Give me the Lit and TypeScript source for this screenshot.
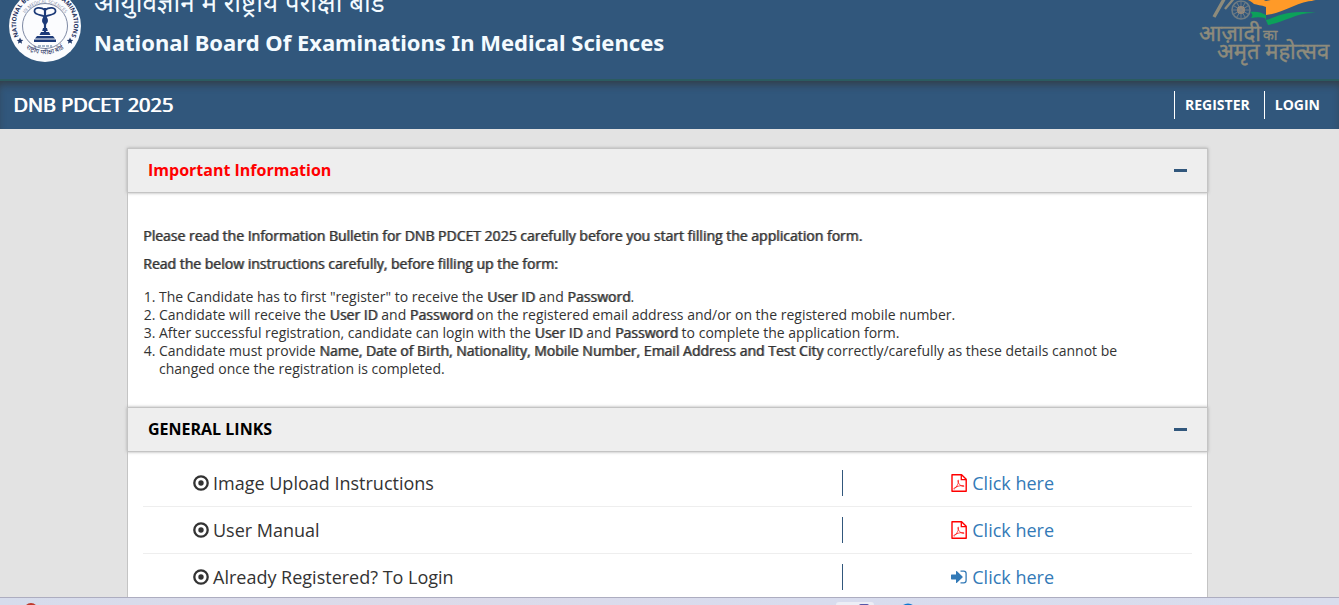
import { LitElement, html, css, svg, nothing } from "lit";
import { customElement, property } from "lit/decorators.js";

type LinkRow = { label: string; kind: "pdf" | "login"; href: string };

const LINKS: LinkRow[] = [
  { label: "Image Upload Instructions", kind: "pdf", href: "#image-upload" },
  { label: "User Manual", kind: "pdf", href: "#user-manual" },
  { label: "Already Registered? To Login", kind: "login", href: "#login" },
];

const pdfIcon = html`<svg class="icon pdf" viewBox="0 0 16 18" width="16" height="18" aria-hidden="true">
  <path d="M1 .8h9.6L15.2 5.200V17.200H1z" fill="none" stroke="currentColor" stroke-width="1.4" stroke-linejoin="round" />
  <path d="M10.300 1v4.700H15" fill="none" stroke="currentColor" stroke-width="1.300" />
  <path d="M3 15.200c1.500-.6 4.500-5 4.600-8.300.1-1.200-1-1-.8.200.4 2.300 2.500 4.900 5.200 5.400 1.400.2 1.500-.9.100-1-2.400-.1-6.300.8-8.600 2.400-.9.700-1 1.200-.5 1.300z" fill="none" stroke="currentColor" stroke-width=".7" />
</svg>`;

const loginIcon = html`<svg class="icon" viewBox="0 0 16 18" width="16" height="18" aria-hidden="true">
  <path d="M0 7.200a.6.6 0 0 1 .6-.6H5V3.600c0-.6.6-.8 1-.4l5.500 5.300c.3.300.3.700 0 1L6 14.800c-.4.400-1 .2-1-.4v-3H.6a.6.6 0 0 1-.6-.6z" fill="currentColor" />
  <path d="M9.500 3.200h3.200c1.400 0 2.400 1 2.400 2.300v7c0 1.300-1 2.300-2.400 2.300H9.500" fill="none" stroke="currentColor" stroke-width="1.300" />
</svg>`;

const bulletIcon = html`<svg class="icon bullet" viewBox="0 0 16 16" width="16" height="16" aria-hidden="true">
  <circle cx="8" cy="8" r="6.700" fill="none" stroke="currentColor" stroke-width="2.300" />
  <circle cx="8" cy="8" r="2.700" fill="currentColor" />
</svg>`;

@customElement("board-seal")
class BoardSeal extends LitElement {
  static styles = css`
    :host { display: block; }
    svg { display: block; }
    text { font-family: "Open Sans", "Noto Sans", sans-serif; fill: #1c2f5c; }
  `;
  render() {
    return html`<svg width="72" height="72" viewBox="0 0 72 72" role="img" aria-label="National Board of Examinations seal">
      <defs>
        <path id="outer" d="M10 47A29 29 0 1 1 62 47" />
        <path id="inner" d="M13 46A24.500 24.500 0 1 1 59 46" />
        <path id="lower" d="M7 47A33 33 0 0 0 65 47" />
      </defs>
      <circle cx="36" cy="36" r="36" fill="#fbfcfe" />
      <circle cx="36" cy="36" r="22.500" fill="none" stroke="#5d6b8c" stroke-width=".8" />
      <text font-size="6.200" font-weight="700"><textPath href="#outer" startOffset="50%" text-anchor="middle">NATIONAL BOARD OF EXAMINATIONS</textPath></text>
      <text font-size="4.500" opacity=".6"><textPath href="#inner" startOffset="50%" text-anchor="middle">IN MEDICAL SCIENCES</textPath></text>
      <text font-size="6.500"><textPath href="#lower" startOffset="50%" text-anchor="middle">राष्ट्रीय परीक्षा बोर्ड</textPath></text>
      <path d="M11 47.500l1 2.200 2.300.2-1.800 1.600.6 2.300-2.100-1.200-2.100 1.200.6-2.300-1.800-1.600 2.300-.2zM61 47.500l1 2.200 2.300.2-1.800 1.600.6 2.300-2.100-1.200-2.100 1.200.6-2.300-1.800-1.600 2.300-.2z" fill="#1d3568" />
      <g fill="none" stroke="#1c3a78" stroke-width="1.800">
        <path d="M36 20c-4-3-11-3-10.500 1.500s9 2.500 11.500 6-1 5-1 8" />
        <path d="M36 20c4-3 11-3 10.500 1.500s-9 2.500-11.500 6 1 5 1 8" />
        <path d="M36 18v24" stroke-width="2.200" />
      </g>
      <circle cx="36" cy="31" r="2.800" fill="#1c3a78" />
      <path d="M34 38h4l.8 3h-5.600zM32 42h8l1.500 3h-11zM28 46h16l2 2.500H26zM25 49.500h22v2.500H25z" fill="#1c3a78" />
      <path d="M29 56h14" stroke="#a3b6ca" stroke-width="2" stroke-dasharray="3 1" />
    </svg>`;
  }
}

@customElement("amrit-mark")
class AmritMark extends LitElement {
  static styles = css`
    :host { display: block; }
    svg { display: block; overflow: visible; }
    text { font-family: "Noto Sans Devanagari", "Noto Sans", sans-serif; fill: #8e8b7b; stroke: #8e8b7b; stroke-width: .4; }
  `;
  render() {
    const spokes = Array.from({ length: 12 }, (_, i) => i * 30);
    return html`<svg width="134" height="84" viewBox="0 0 134 84" role="img" aria-label="Azadi Ka Amrit Mahotsav">
      <path d="M12 16h18L17 39" fill="none" stroke="#8e8b7b" stroke-width="3.400" />
      <path d="M39 18L28 31" fill="none" stroke="#8e8b7b" stroke-width="2.400" />
      <circle cx="44" cy="32" r="9" fill="none" stroke="#6f7c83" stroke-width="1.600" />
      <circle cx="44" cy="32" r="4" fill="#a58c70" />
      ${spokes.map((a) => svg`<path d="M44 32v-8.500" stroke="#7d8286" stroke-width=".8" transform="rotate(${a} 44 32)" />`)}
      <path d="M46 20C54 16 62 20 69 23C82 20 96 18 120 23C104 21 88 35 69 37V29C64 27 60 27 57 26C54 23 51 22 46 20z" fill="#ff9a28" />
      <path d="M53 34C59 33 64 34 69 37V42C78 40 88 31 119 35C100 34 88 44 71 47L68 40C64 39 59 39 54 40C56 38 56 36 53 34z" fill="#0ca15a" />
      <text x="2" y="63" font-size="22">आज़ादी</text>
      <text x="66" y="62" font-size="14">का</text>
      <text x="20" y="81" font-size="22">अमृत महोत्सव</text>
    </svg>`;
  }
}

@customElement("info-panel")
class InfoPanel extends LitElement {
  @property() heading = "";
  @property({ type: Boolean }) alert = false;
  @property({ type: Boolean }) open = true;

  static styles = css`
    :host { display: block; }
    .head {
      display: flex; align-items: center; justify-content: space-between;
      box-sizing: border-box; width: 100%; margin: 0; padding: 10px 20px 11px;
      border: 1px solid #c4c4c4; background: #eee; box-shadow: 0 0 3px #aaa;
      font: 700 16px/22px "Open Sans", sans-serif; color: #000; text-align: left;
      cursor: pointer;
    }
    .alert { color: #f00; }
    .minus { width: 13px; height: 3px; background: #31577c; }
    .body { border: solid #c4c4c4; border-width: 0 1px; padding: 0 15px; }
    h2 { margin: 0; font: inherit; }
  `;
  render() {
    return html`<h2>
        <button class="head ${this.alert ? "alert" : ""}" aria-expanded=${this.open} @click=${() => (this.open = !this.open)}>
          <span>${this.heading}</span><span class="minus"></span>
        </button>
      </h2>
      ${this.open ? html`<div class="body"><slot></slot></div>` : nothing}`;
  }
}

@customElement("app-root")
class AppRoot extends LitElement {
  static styles = css`
    :host {
      display: flex; flex-direction: column; height: 100vh; overflow: hidden;
      background: #e3e3e3; color: #333;
      font: 14px/18px "Open Sans", "Noto Sans", sans-serif;
    }
    .view { flex: 1; min-height: 0; overflow: hidden; }
    .banner {
      display: flex; justify-content: space-between; align-items: flex-end;
      margin-top: -22px; padding: 0 8px 17px 9px;
      background: #31577c; border-bottom: 2px solid #2b5b60; color: #f4fbff;
    }
    .brand { display: flex; align-items: flex-end; gap: 13px; }
    .names { display: flex; flex-direction: column; }
    .hindi { font: 400 26px/32px "Noto Sans Devanagari", "Noto Sans", sans-serif; }
    .english { font: 700 22px/40px "Noto Sans", "Open Sans", sans-serif; }
    .nav {
      display: flex; align-items: center; justify-content: space-between;
      padding: 0 9px 0 13px; min-height: 48px; background: #31577c; color: #fff;
      box-shadow: inset 0 6px 8px -3px #333d44;
    }
    .nav h1 { margin: 0; font: 400 20px/28px "Open Sans", sans-serif; text-shadow: 1px 0 0 #fff; }
    .menu { display: flex; }
    .menu a {
      padding: 0 10px; border-left: 1px solid #fff; color: #fff; text-decoration: none;
      font-weight: 700; line-height: 28px;
    }
    .menu a:first-child { padding-right: 14px; }
    .page { padding: 19px 18px 0 14px; }
    .card { max-width: 1081px; margin: 0 auto; background: #fff; }
    .intro { padding: 33px 0 29px; }
    .intro p { margin: 0 0 8px; line-height: 20px; }
    b, .intro p { font-weight: 400; text-shadow: 1px 0 0 #333a; }
    ol { margin: 14px 30px 0 0; padding-left: 16px; }
    .links { margin: 0; padding: 8px 0 0; list-style: none; font-size: 18px; line-height: 26px; }
    .links li { display: grid; grid-template-columns: 2fr 1fr; padding: 10px 0; border-bottom: 1px solid #eee; }
    .name { padding-left: 50px; display: flex; align-items: center; gap: 4px; }
    .go { border-left: 1px solid #31577c; padding-right: 30px; display: flex; justify-content: center; }
    .go a { display: flex; align-items: center; gap: 5px; color: #337ab7; text-decoration: none; }
    .icon { flex: none; }
    .pdf { color: #f00; }
    .taskbar { flex: none; border-top: 1px solid #adadc0; background: linear-gradient(90deg, #d6dcec, #dcdae9 30%, #d8dcee 60%, #d9dded); }
    .taskbar svg { display: block; width: 100%; height: 7px; }
  `;
  render() {
    return html`
      <div class="view">
        <header class="banner">
          <div class="brand">
            <board-seal></board-seal>
            <div class="names">
              <span class="hindi" lang="hi">आयुर्विज्ञान में राष्ट्रीय परीक्षा बोर्ड</span>
              <span class="english">National Board Of Examinations In Medical Sciences</span>
            </div>
          </div>
          <amrit-mark></amrit-mark>
        </header>
        <nav class="nav">
          <h1>DNB PDCET 2025</h1>
          <div class="menu"><a href="#register">REGISTER</a><a href="#login">LOGIN</a></div>
        </nav>
        <main class="page">
          <div class="card">
            <info-panel heading="Important Information" alert>
              <div class="intro">
                <p>Please read the Information Bulletin for DNB PDCET 2025 carefully before you start filling the application form.</p>
                <p>Read the below instructions carefully, before filling up the form:</p>
                <ol>
                  <li>The Candidate has to first "register" to receive the <b>User ID</b> and <b>Password</b>.</li>
                  <li>Candidate will receive the <b>User ID</b> and <b>Password</b> on the registered email address and/or on the registered mobile number.</li>
                  <li>After successful registration, candidate can login with the <b>User ID</b> and <b>Password</b> to complete the application form.</li>
                  <li>Candidate must provide <b>Name, Date of Birth, Nationality, Mobile Number, Email Address and Test City</b> correctly/carefully as these details cannot be changed once the registration is completed.</li>
                </ol>
              </div>
            </info-panel>
            <info-panel heading="GENERAL LINKS">
              <ul class="links">
                ${LINKS.map((l) => html`<li>
                  <span class="name">${bulletIcon}${l.label}</span>
                  <span class="go"><a href=${l.href}>${l.kind === "pdf" ? pdfIcon : loginIcon}<span>Click here</span></a></span>
                </li>`)}
              </ul>
            </info-panel>
          </div>
        </main>
      </div>
      <footer class="taskbar">
        <svg viewBox="0 0 1339 7" preserveAspectRatio="xMinYMin slice" aria-hidden="true">
          <circle cx="31" cy="12" r="7" fill="#c0392b" />
          <rect x="836" y="4" width="38" height="8" rx="3" fill="#eceef6" />
          <rect x="859" y="6" width="10" height="4" rx="2" fill="#5558a8" />
          <circle cx="908" cy="14" r="8.500" fill="#0f78d0" />
        </svg>
      </footer>
    `;
  }
}
